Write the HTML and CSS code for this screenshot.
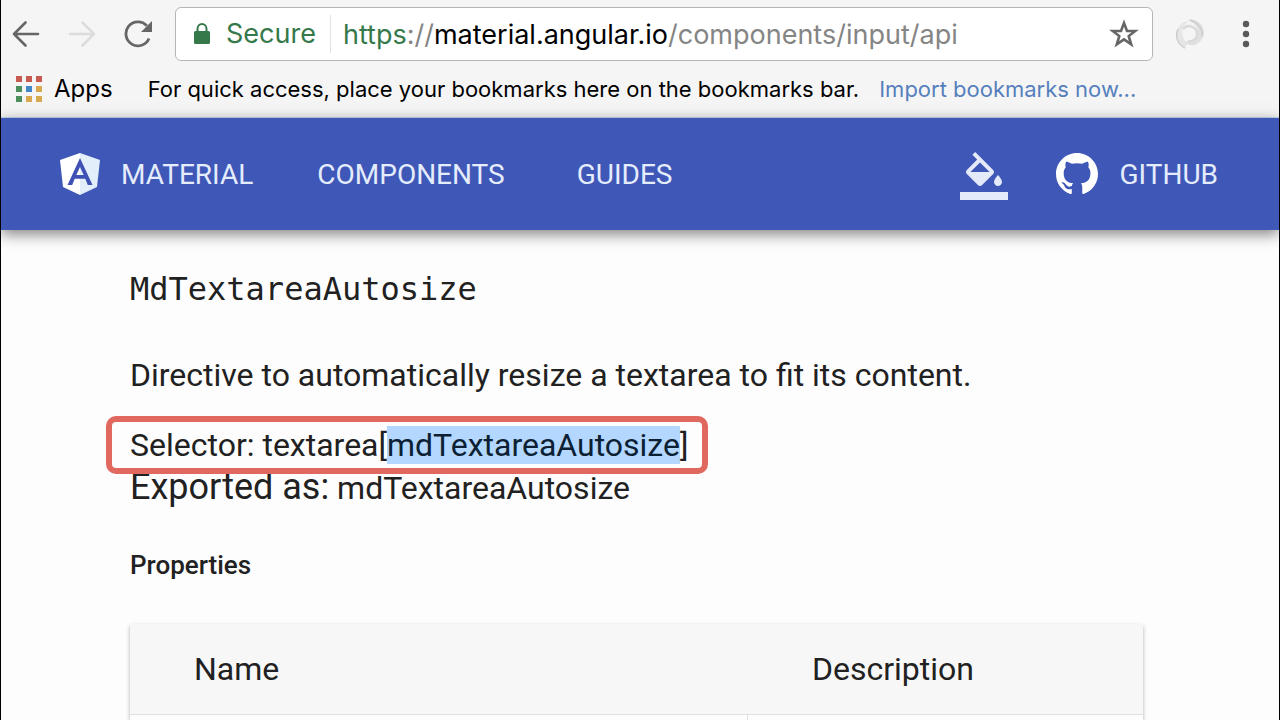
FILE: index.html
```html
<!DOCTYPE html>
<html lang="en">
<head>
<meta charset="utf-8">
<title>Angular Material - Input API</title>
<link rel="stylesheet" href="styles.css">
</head>
<body>
<div class="window">
  <header class="browser">
    <div class="toolbar">
      <button class="tool" type="button" aria-label="Back">
        <svg width="28" height="28" viewBox="0 0 28 28" fill="none" stroke="#666" stroke-width="2.6" stroke-linecap="round" stroke-linejoin="round"><path d="M26 14H2M13.500 2.500L2 14l11.500 11.500"/></svg>
      </button>
      <button class="tool" type="button" aria-label="Forward" disabled>
        <svg width="28" height="28" viewBox="0 0 28 28" fill="none" stroke="#dcdcdc" stroke-width="2.6" stroke-linecap="round" stroke-linejoin="round"><path d="M2 14h24M14.500 2.500L26 14 14.500 25.500"/></svg>
      </button>
      <button class="tool" type="button" aria-label="Reload">
        <svg width="28" height="28" viewBox="0 0 28 28"><path d="M22.800 5.700A12 12 0 1 0 25 18.500" fill="none" stroke="#666" stroke-width="2.800"/><path d="M28 1v11H17z" fill="#666"/></svg>
      </button>
      <div class="omnibox">
        <svg class="lock" width="18" height="24" viewBox="0 0 18 24"><path d="M4.500 10V7a4.500 5 0 0 1 9 0v3" fill="none" stroke="#35794a" stroke-width="2"/><rect x="1" y="9" width="16" height="13" rx="1.500" fill="#35794a"/></svg>
        <span class="secure">Secure</span>
        <div class="url" role="textbox" contenteditable="true" spellcheck="false" aria-label="Address"><span class="scheme">https</span>://<span class="host">material.angular.io</span>/components/input/api</div>
        <button class="star" type="button" aria-label="Bookmark this page">
          <svg width="30" height="30" viewBox="0 0 30 30"><path d="M15 4l3 8h8.200l-6.500 5.100 2.500 8.300-7.200-5-7.200 5 2.500-8.300L3.800 12H12z" fill="none" stroke="#666" stroke-width="2.600"/></svg>
        </button>
      </div>
      <button class="tool extension" type="button" aria-label="Extension">
        <svg width="34" height="34" viewBox="0 0 34 34" fill="none"><path d="M12 30C3 26 1 18 5 11c2-4 6-7 11-7-6 4-8 10-6 15 1 4 3 6 5 7z" fill="#e6e6e6"/><path d="M15 3c9-2 17 5 16 14-1 6-5 9-9 11-4 1-9 0-11-4 7 3 14-1 14-8 0-6-4-10-10-13z" fill="#e0e0e0"/><path d="M17 3c8 2 13 9 12 16M12 31C4 27 2 19 5 12" stroke="#cdcdcd" stroke-width="1.500"/><path d="M10 12c5-6 14-2 14 5 0 5-4 8-9 7" stroke="#dadada" stroke-width="2.500"/></svg>
      </button>
      <button class="tool" type="button" aria-label="Menu">
        <svg width="8" height="28" viewBox="0 0 8 28" fill="#5a5a5a"><circle cx="4" cy="4" r="3.200"/><circle cx="4" cy="14" r="3.200"/><circle cx="4" cy="24" r="3.200"/></svg>
      </button>
    </div>
    <div class="bookmarks">
      <button class="apps" type="button">
        <svg width="26" height="26" viewBox="0 0 26 26"><path d="M0 0h6v6H0zM10 0h6v6h-6zM20 0h6v6h-6z" fill="#c75b52"/><path d="M0 10h6v6H0zM0 20h6v6H0z" fill="#4d8f5c"/><path d="M10 10h6v6h-6z" fill="#4286c5"/><path d="M20 10h6v6h-6zM10 20h6v6h-6zM20 20h6v6h-6z" fill="#d9a94f"/></svg>
        <span>Apps</span>
      </button>
      <span class="hint">For quick access, place your bookmarks here on the bookmarks bar.</span>
      <a class="import" href="#">Import bookmarks now...</a>
    </div>
  </header>
  <nav class="nav">
    <a class="brand" href="#">
      <svg width="40" height="42" viewBox="0 0 40 42"><path d="M20 0L0 7l3 27 17 8z" fill="#fff"/><path d="M20 0l20 7-3 27-17 8z" fill="#e3eefb"/><path d="M20 5L7.500 32h4.700l2.500-6.200h10.600l2.500 6.200h4.700zm0 9l3.700 8h-7.400z" fill="#3f51b5" fill-rule="evenodd"/></svg>
      <span>MATERIAL</span>
    </a>
    <a class="components" href="#">COMPONENTS</a>
    <a href="#">GUIDES</a>
    <button class="theme" type="button" aria-label="Choose theme">
      <svg width="48" height="48" viewBox="0 0 24 24" fill="#e5eafa"><path d="M16.560 8.940L7.620 0 6.210 1.410l2.380 2.380-5.150 5.150c-.59.59-.59 1.540 0 2.120l5.500 5.500c.29.290.680.440 1.060.440s.770-.150 1.060-.440l5.500-5.500c.590-.580.590-1.530 0-2.120zM5.210 10L10 5.210 14.790 10zM19 11.500s-2 2.170-2 3.500c0 1.100.9 2 2 2s2-.9 2-2c0-1.330-2-3.500-2-3.500zM0 20h24v4H0z"/></svg>
    </button>
    <a class="github" href="#">
      <svg width="42" height="42" viewBox="0 0 16 16" fill="#fff"><path fill-rule="evenodd" d="M8 0C3.580 0 0 3.580 0 8c0 3.540 2.290 6.530 5.470 7.590.4.070.55-.17.55-.38 0-.19-.010-.82-.010-1.490-2.010.37-2.530-.49-2.690-.94-.090-.23-.48-.94-.82-1.130-.28-.15-.68-.52-.010-.53.63-.010 1.080.58 1.230.82.72 1.210 1.870.87 2.330.66.070-.52.28-.87.510-1.070-1.780-.2-3.640-.89-3.640-3.950 0-.87.310-1.590.82-2.150-.080-.2-.36-1.020.080-2.120 0 0 .67-.210 2.200.82.64-.18 1.320-.27 2-.27s1.360.090 2 .27c1.530-1.040 2.200-.82 2.200-.82.44 1.100.16 1.920.080 2.120.51.56.82 1.270.82 2.150 0 3.070-1.870 3.750-3.650 3.950.29.25.54.73.54 1.480 0 1.070-.010 1.930-.010 2.200 0 .210.15.460.55.380A8.010 8.010 0 0 0 16 8c0-4.420-3.580-8-8-8z"/></svg>
      <span>GITHUB</span>
    </a>
  </nav>
  <main class="content">
    <h1 class="title">MdTextareaAutosize</h1>
    <p class="summary">Directive to automatically resize a textarea to fit its content.</p>
    <p class="selector">Selector: textarea[<mark>mdTextareaAutosize</mark>]</p>
    <p class="exported"><span class="label">Exported as:</span> mdTextareaAutosize</p>
    <h2 class="subtitle">Properties</h2>
    <table class="properties">
      <thead><tr><th class="name" scope="col">Name</th><th scope="col">Description</th></tr></thead>
      <tbody><tr><td></td><td></td></tr></tbody>
    </table>
  </main>
</div>
</body>
</html>
```
FILE: styles.css
```css
* { box-sizing: border-box; }

body {
  margin: 0;
  background: #fdfdfd;
  color: #212121;
  font-family: Roboto, sans-serif;
}

button {
  padding: 0;
  border: 0;
  background: none;
  color: inherit;
  font: inherit;
}

a { color: inherit; text-decoration: none; }
svg { display: block; flex: none; }

.window {
  height: 100vh;
  overflow: hidden;
  border: solid #000;
  border-width: 0 1px;
}

.browser {
  background: #f5f5f5;
  border-bottom: 1px solid #c9dcf0;
  color: #000;
  font-family: Inter, sans-serif;
}

.toolbar {
  display: flex;
  align-items: center;
  gap: 28px;
  padding: 7px 29px 0 11px;
}

.omnibox {
  flex: 1;
  display: flex;
  align-items: center;
  height: 54px;
  margin: 0 -8px 0 -5px;
  padding: 0 13px 0 17px;
  border: 1px solid #b5b5b5;
  border-radius: 6px;
  background: #fff;
  font-size: 27px;
}

.extension { margin-right: 7px; }

.secure {
  margin-left: 15px;
  padding-right: 14px;
  border-right: 1px solid #e2e2e2;
  color: #35794a;
  line-height: 38px;
}

.url {
  flex: 1;
  padding-left: 12px;
  outline: 0;
  color: #858585;
  font-size: 27px;
  white-space: nowrap;
}

.scheme { color: #35794a; }
.host { color: #000; }

.bookmarks {
  display: flex;
  align-items: center;
  height: 56px;
  padding-left: 15px;
  font-size: 22px;
  line-height: 28px;
  white-space: nowrap;
}

.apps {
  display: flex;
  align-items: center;
  gap: 12px;
  font-size: 24px;
}

.hint { margin-left: 35px; }
.import { margin-left: 20px; color: #5580bd; }

.nav {
  position: relative;
  display: flex;
  align-items: center;
  height: 112px;
  padding: 0 61px 0 59px;
  background: #3f58b8;
  box-shadow: 0 4px 14px rgba(0, 0, 0, 0.5);
  color: #e5ecfc;
  font-size: 28px;
}

.brand, .github { display: flex; align-items: center; gap: 21px; }
.components { margin: 0 72px 0 64px; }
.theme { margin: 4px 48px 0 auto; }

.content { padding: 37px 136px 0 129px; }

.title {
  margin: 0;
  font: 400 32px/44px "DejaVu Sans Mono", monospace;
}

.summary {
  margin: 42px 0 0;
  font-size: 32px;
  line-height: 44px;
}

.selector {
  position: relative;
  width: fit-content;
  margin: 26px 0 0;
  font-size: 32px;
  line-height: 44px;
}

.selector::after {
  content: "";
  position: absolute;
  inset: -7px -20px -7px -24px;
  border: 6px solid #e0685f;
  border-radius: 10px;
}

mark { background: #b3d7fe; color: #0c1f33; }

.exported {
  margin: 0;
  font-size: 32px;
  line-height: 40px;
}

.label { font-size: 36px; }

.subtitle {
  margin: 41px 0 0;
  font-size: 26px;
  font-weight: 500;
  line-height: 32px;
}

.properties {
  width: 100%;
  margin-top: 43px;
  border-collapse: collapse;
  box-shadow: 0 2px 4px rgba(0, 0, 0, 0.3);
  font-size: 32px;
}

th {
  height: 90px;
  padding: 0 64px;
  border-bottom: 1px solid #e0e0e0;
  background: #f7f7f7;
  font-weight: 400;
  text-align: left;
}

.name { width: 61%; }

td { height: 80px; }
td + td { border-left: 1px solid #e0e0e0; }
```
